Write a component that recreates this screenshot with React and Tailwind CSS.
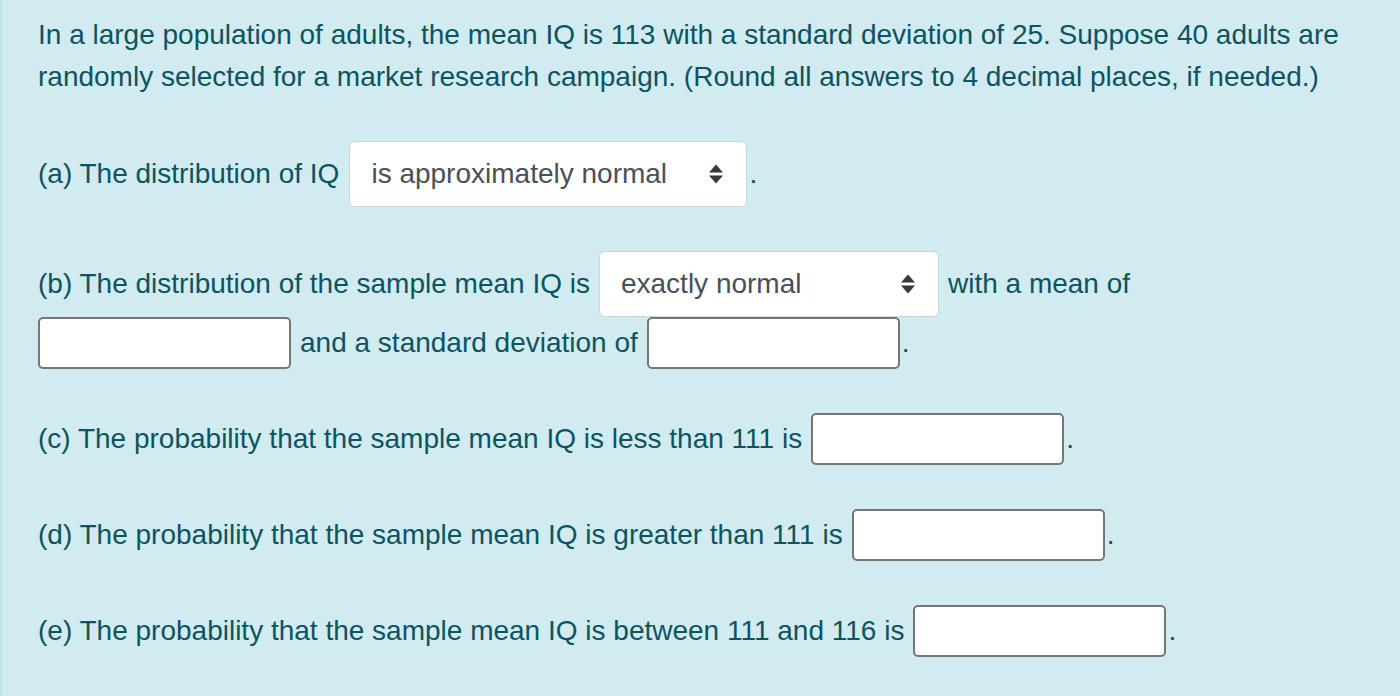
import React from "react";

function Arrows() {
  return (
    <svg width="14" height="20" viewBox="0 0 14 20" className="shrink-0">
      <path d="M7 0.5 L14 8.5 L0 8.5 Z" fill="#343a40" />
      <path d="M0 11.5 L14 11.5 L7 19.5 Z" fill="#343a40" />
    </svg>
  );
}

function Select({ value, width }) {
  return (
    <div
      className={`h-[66px] ${width} bg-white border border-[#ced4da] rounded-[6px] flex items-center justify-between pl-[21px] pr-[23px] text-[#495057] shrink-0`}
    >
      <span>{value}</span>
      <Arrows />
    </div>
  );
}

function Box() {
  return <div className="h-[52px] w-[253px] bg-white border-2 border-[#767676] rounded-[5px] shrink-0" />;
}

export default function App() {
  return (
    <div
      className="w-[1400px] h-[696px] bg-[#d1ebf0] border-l-2 border-[#bee5eb] text-[#0c5460] text-[28px] leading-[42px] pl-[36px] pt-[14px] overflow-hidden"
      style={{ fontFamily: '"Liberation Sans", Arial, sans-serif' }}
    >
      <p className="m-0 whitespace-nowrap">
        In a large population of adults, the mean IQ is 113 with a standard deviation of 25. Suppose 40 adults are
        <br />
        randomly selected for a market research campaign. (Round all answers to 4 decimal places, if needed.)
      </p>

      <div className="flex flex-col gap-[44px] mt-[43px] whitespace-nowrap">
        <div className="flex items-center">
          <span className="mr-[10px]">(a) The distribution of IQ</span>
          <Select value="is approximately normal" width="w-[398px]" />
          <span className="ml-[2px]">.</span>
        </div>

        <div className="flex flex-col">
          <div className="flex items-center">
            <span className="mr-[9px]">(b) The distribution of the sample mean IQ is</span>
            <Select value="exactly normal" width="w-[340px]" />
            <span className="ml-[9px]">with a mean of</span>
          </div>
          <div className="flex items-center">
            <Box />
            <span className="mx-[9px]">and a standard deviation of</span>
            <Box />
            <span className="ml-[2px]">.</span>
          </div>
        </div>

        <div className="flex items-center">
          <span className="mr-[9px]">(c) The probability that the sample mean IQ is less than 111 is</span>
          <Box />
          <span className="ml-[2px]">.</span>
        </div>

        <div className="flex items-center">
          <span className="mr-[9px]">(d) The probability that the sample mean IQ is greater than 111 is</span>
          <Box />
          <span className="ml-[2px]">.</span>
        </div>

        <div className="flex items-center">
          <span className="mr-[9px]">(e) The probability that the sample mean IQ is between 111 and 116 is</span>
          <Box />
          <span className="ml-[2px]">.</span>
        </div>
      </div>
    </div>
  );
}
